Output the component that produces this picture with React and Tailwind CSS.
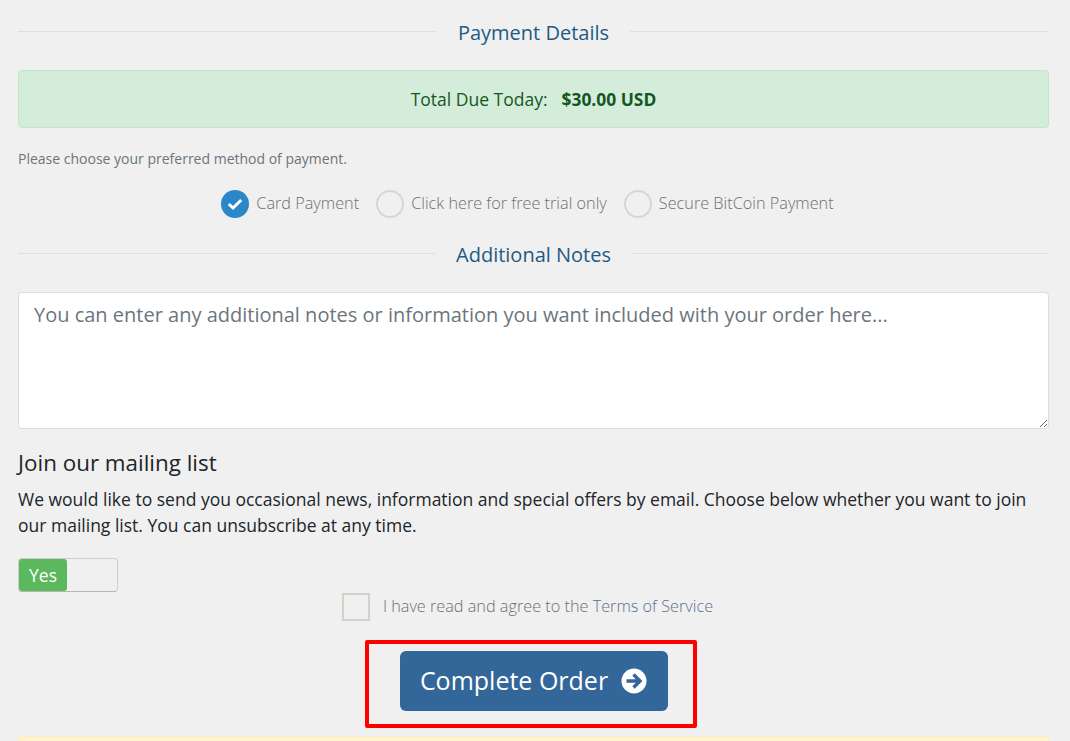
function Divider({ children, className }) {
  return (
    <div className={"flex items-center gap-[21px] " + className}>
      <div className="h-px flex-1 bg-[#dfdfdf]" />
      <span className="translate-y-[2px] text-[20px] leading-[28px] text-[#1f5a83]">{children}</span>
      <div className="h-px flex-1 bg-[#dfdfdf]" />
    </div>
  );
}

function Radio({ checked, children }) {
  return (
    <label className="flex items-center gap-[7px]">
      {checked ? (
        <span className="flex h-[28px] w-[28px] items-center justify-center rounded-full bg-[#2a88c8]">
          <svg width="16" height="14" viewBox="0 0 16 14" fill="none">
            <path d="M1.8 7 L6 11 L14.2 3" stroke="#fff" strokeWidth="3" />
          </svg>
        </span>
      ) : (
        <span className="h-[28px] w-[28px] rounded-full border-2 border-[#d9d6d0]" />
      )}
      <span className="-translate-y-[1px] text-[16.25px] font-light leading-[24px] text-[#6f6f6f]">{children}</span>
    </label>
  );
}

export default function App() {
  return (
    <div className="relative h-[741px] overflow-hidden bg-[#f0f0f0] pl-[18px] pr-[21px] pt-[17px] font-['Open_Sans',sans-serif] text-[#212529]">
      <Divider className="h-[28px]">Payment Details</Divider>

      <div className="mt-[25px] flex h-[58px] items-center justify-center gap-[14px] rounded-[4px] border border-[#c3e6cb] bg-[#d4edda] text-[17.5px] text-[#155724]">
        <span>Total Due Today:</span>
        <strong className="font-bold text-[17.4px]">$30.00 USD</strong>
      </div>

      <p className="mt-[21px] text-[14px] leading-[20px] text-[#6c757d]">Please choose your preferred method of payment.</p>

      <div className="mt-[21px] flex justify-center gap-[17px] pr-[12px]">
        <Radio checked>Card Payment</Radio>
        <Radio>Click here for free trial only</Radio>
        <Radio>Secure BitCoin Payment</Radio>
      </div>

      <Divider className="mt-[21px] h-[28px]">Additional Notes</Divider>

      <textarea
        className="mt-[25px] block h-[137px] w-full rounded-[4px] border border-[#dcdcdc] bg-white px-[15px] py-[7px] text-[20px] leading-[30px] outline-none placeholder:text-[#6c757d]"
        placeholder="You can enter any additional notes or information you want included with your order here..."
      />

      <h3 className="mt-[18px] text-[22.4px] leading-[32px] text-[#212529]">Join our mailing list</h3>
      <p className="mt-[7px] text-[17.5px] leading-[26px]">
        We would like to send you occasional news, information and special offers by email. Choose below whether you want to join our mailing list. You can unsubscribe at any time.
      </p>

      <div className="mt-[20px] flex h-[34px] w-[100px] rounded-[4px] border border-[#cfcfcf] border-b-[#b5b5b5] bg-[#f0f0f0]">
        <span className="flex w-[48px] items-center justify-center rounded-[3px] bg-[#5cb85c] text-[17.5px] text-white">Yes</span>
      </div>

      <div className="mt-[1px] flex items-center justify-center gap-[13px] pr-[12px]">
        <span className="h-[28px] w-[28px] border-2 border-[#d6d0c8]" />
        <span className="-translate-y-[1px] text-[16.25px] font-light leading-[28px] text-[#6f6f6f]">
          I have read and agree to the <a className="text-[#5a6f90]">Terms of Service</a>
        </span>
      </div>

      <div className="mt-[30px] flex justify-center">
        <button className="flex h-[60px] w-[268px] items-center justify-center gap-[13px] rounded-[6px] bg-[#336699] text-[25px] text-white">
          Complete Order
          <svg width="26" height="26" viewBox="0 0 26 26">
            <circle cx="13" cy="13" r="12.5" fill="#fff" />
            <path d="M5.5 13 H18 M12.5 6.5 L19 13 L12.5 19.5" fill="none" stroke="#336699" strokeWidth="3.4" />
          </svg>
        </button>
      </div>

      <div className="mt-[25px] h-[20px] border border-[#ffeeba] bg-[#fff3cd]" />

      <div className="absolute left-[365px] top-[640px] h-[88px] w-[332px] rounded-[2px] border-[4px] border-[#ff0000]" />
    </div>
  );
}
